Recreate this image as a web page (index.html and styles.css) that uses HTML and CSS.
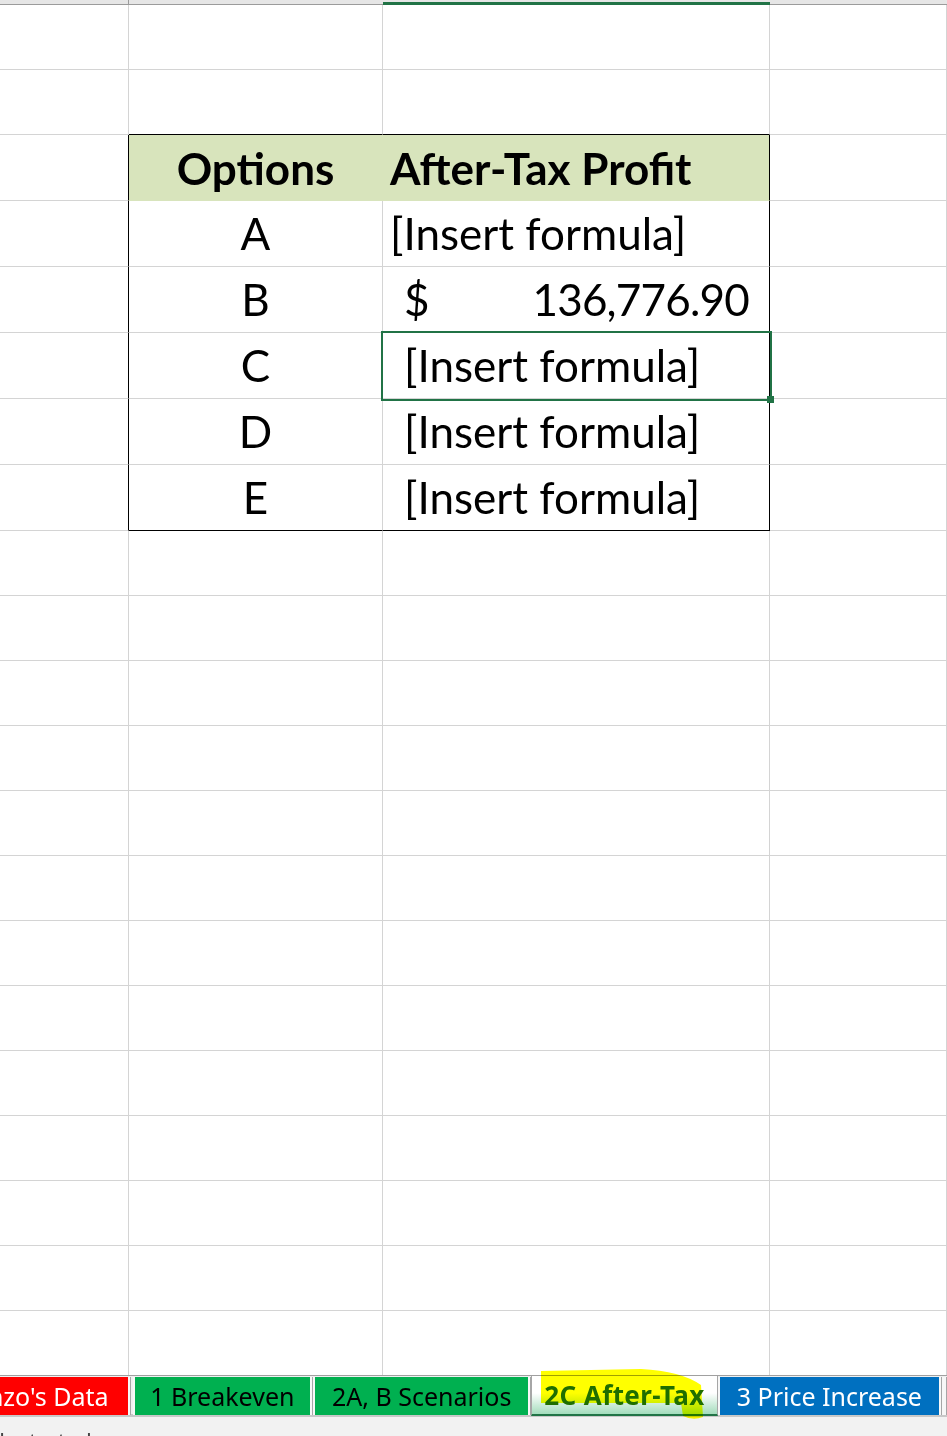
FILE: index.html
```html
<!DOCTYPE html>
<html lang="en">
<head>
  <meta charset="UTF-8" />
  <title>2C After-Tax</title>
  <link rel="stylesheet" href="styles.css">
</head>
<body>
  <div class="colhead">
    <div class="h0"></div>
    <div class="h1"></div>
    <div class="h2"></div>
    <div class="h3"></div>
  </div>

  <div class="sheet">
    <div class="row"><div class="c0"></div><div class="c1"></div><div class="c2"></div><div class="c3"></div></div>
    <div class="row above-table"><div class="c0"></div><div class="c1"></div><div class="c2"></div><div class="c3"></div></div>

    <div class="row tall thead">
      <div class="c0"></div>
      <div class="c1 center bold">Options</div>
      <div class="c2 bold">After-Tax Profit</div>
      <div class="c3"></div>
    </div>
    <div class="row tall tbody">
      <div class="c0"></div>
      <div class="c1 center">A</div>
      <div class="c2">[Insert formula]</div>
      <div class="c3"></div>
    </div>
    <div class="row tall tbody">
      <div class="c0"></div>
      <div class="c1 center">B</div>
      <div class="c2 money"><span>$</span><span class="amount">136,776.90</span></div>
      <div class="c3"></div>
    </div>
    <div class="row tall tbody">
      <div class="c0"></div>
      <div class="c1 center">C</div>
      <div class="c2 indent selected">[Insert formula]</div>
      <div class="c3"></div>
    </div>
    <div class="row tall tbody">
      <div class="c0"></div>
      <div class="c1 center">D</div>
      <div class="c2 indent">[Insert formula]</div>
      <div class="c3"></div>
    </div>
    <div class="row tall tbody last">
      <div class="c0"></div>
      <div class="c1 center">E</div>
      <div class="c2 indent">[Insert formula]</div>
      <div class="c3"></div>
    </div>

    <div class="row"><div class="c0"></div><div class="c1"></div><div class="c2"></div><div class="c3"></div></div>
    <div class="row"><div class="c0"></div><div class="c1"></div><div class="c2"></div><div class="c3"></div></div>
    <div class="row"><div class="c0"></div><div class="c1"></div><div class="c2"></div><div class="c3"></div></div>
    <div class="row"><div class="c0"></div><div class="c1"></div><div class="c2"></div><div class="c3"></div></div>
    <div class="row"><div class="c0"></div><div class="c1"></div><div class="c2"></div><div class="c3"></div></div>
    <div class="row"><div class="c0"></div><div class="c1"></div><div class="c2"></div><div class="c3"></div></div>
    <div class="row"><div class="c0"></div><div class="c1"></div><div class="c2"></div><div class="c3"></div></div>
    <div class="row"><div class="c0"></div><div class="c1"></div><div class="c2"></div><div class="c3"></div></div>
    <div class="row"><div class="c0"></div><div class="c1"></div><div class="c2"></div><div class="c3"></div></div>
    <div class="row"><div class="c0"></div><div class="c1"></div><div class="c2"></div><div class="c3"></div></div>
    <div class="row"><div class="c0"></div><div class="c1"></div><div class="c2"></div><div class="c3"></div></div>
    <div class="row"><div class="c0"></div><div class="c1"></div><div class="c2"></div><div class="c3"></div></div>
    <div class="row"><div class="c0"></div><div class="c1"></div><div class="c2"></div><div class="c3"></div></div>
  </div>

  <div class="tabbar">
    <div class="tab red"><span>Lorenzo's Data</span></div>
    <div class="tab green w1">1 Breakeven</div>
    <div class="tab green w2">2A, B Scenarios</div>
    <div class="tab active">
      <svg class="marker" width="170" height="52" viewBox="0 0 170 52">
        <path d="M0 2 L100 0 Q140 2 160 16 L162 48 Q152 52 142 47 L140 34 L0 34 Z" fill="#ffff00"/>
      </svg>
      <span>2C After-Tax</span>
    </div>
    <div class="tab blue">3 Price Increase</div>
    <div class="tab rest"></div>
  </div>

  <div class="status">Illustrated</div>
</body>
</html>
```

FILE: styles.css
```css
body {
  margin: 0;
  width: 947px;
  height: 1436px;
  overflow: hidden;
  background: #fff;
  font-family: Lato, "Liberation Sans", sans-serif;
  color: #000;
}

/* column header strip */
.colhead {
  display: flex;
  height: 5px;
}
.colhead div {
  box-sizing: border-box;
  height: 5px;
  background: #e6e6e6;
  border-bottom: 1px solid #9b9b9b;
}
.h0 { width: 129px; border-right: 1px solid #9b9b9b; }
.h1 { width: 254px; }
.colhead .h2 { width: 387px; border-bottom: 3px solid #217346; }
.h3 { flex: 1; }

/* grid */
.sheet {
  height: 1370px;
  overflow: hidden;
}
.row {
  display: flex;
  height: 65px;
}
.row.tall {
  height: 66px;
}
.row > div {
  box-sizing: border-box;
  height: 100%;
  border-right: 1px solid #d4d4d4;
  border-bottom: 1px solid #d4d4d4;
  display: flex;
  align-items: flex-end;
  font-size: 44px;
  line-height: 1;
  padding-bottom: 11px;
  white-space: nowrap;
}
.c0 { width: 129px; }
.c1 { width: 254px; }
.c2 { width: 387px; padding-left: 7px; }
.c3 { flex: 1; }

.center { justify-content: center; }
.bold { font-weight: 700; }
.indent { padding-left: 21px; }

.money {
  justify-content: space-between;
  padding-left: 21px;
  padding-right: 20px;
}
.amount {
  letter-spacing: -0.8px;
}

/* table frame */
.above-table .c1,
.above-table .c2 { border-bottom-color: #000; }
.thead .c0,
.tbody .c0 { border-right-color: #000; }
.thead .c2,
.tbody .c2 { border-right-color: #000; }
.thead .c1,
.thead .c2 {
  background: #d8e4bc;
  border-bottom-color: #d8e4bc;
}
.thead .c1 { border-right-color: #d8e4bc; }
.row.thead > div { padding-bottom: 10px; }
.last .c1,
.last .c2 { border-bottom-color: #000; }

/* active cell */
.selected {
  position: relative;
}
.selected::after {
  content: "";
  position: absolute;
  left: -2px;
  top: -2px;
  right: -3px;
  bottom: -3px;
  border: 2px solid #217346;
  z-index: 1;
}
.selected::before {
  content: "";
  position: absolute;
  right: -5px;
  bottom: -5px;
  width: 7px;
  height: 7px;
  background: #217346;
  z-index: 2;
}

/* sheet tabs */
.tabbar {
  display: flex;
  height: 42px;
  box-sizing: border-box;
  border-top: 1px solid #a0a0a0;
  border-bottom: 3px solid #c8c8c8;
  background: #f0f0f0;
  font-family: "Noto Sans", "Open Sans", sans-serif;
  font-size: 25px;
}
.tab {
  box-sizing: border-box;
  height: 38px;
  margin-top: 1px;
  display: flex;
  align-items: center;
  justify-content: center;
  white-space: nowrap;
  border-right: 1px solid #a6a6a6;
  box-shadow: 2px 0 0 #f7f7f7 inset, -2px 0 0 #f7f7f7 inset;
  padding: 0 2px;
}
.tab.red {
  width: 131px;
  background: #ff0000;
  color: #fff;
  justify-content: flex-end;
  padding-right: 21px;
  overflow: hidden;
  box-shadow: -2px 0 0 #f7f7f7 inset;
}
.tab.green {
  background: #00b050;
  color: #000;
}
.w1 { width: 181px; margin-left: 2px; }
.w2 { width: 219px; }
.tab.active {
  position: relative;
  width: 187px;
  margin-top: 0;
  height: 40px;
  background: linear-gradient(#fff 45%, #a3dcbc);
  border-left: 1px solid #a6a6a6;
  border-bottom: 2px solid #217346;
  box-shadow: none;
  color: #1f6e00;
  font-size: 26px;
  font-weight: 700;
  letter-spacing: 0.4px;
}
.tab.active span {
  position: relative;
  z-index: 1;
}
.marker {
  position: absolute;
  left: 9px;
  top: -7px;
  mix-blend-mode: multiply;
}
.tab.blue {
  width: 225px;
  background: #0070c0;
  color: #fff;
}
.tab.rest {
  flex: 1;
  background: #f0f0f0;
}

.status {
  height: 20px;
  margin-left: -14px;
  background: #f2f2f2;
  font-family: "Noto Sans", sans-serif;
  font-size: 22px;
  line-height: 20px;
  padding-top: 13px;
  color: #444;
  overflow: hidden;
}
```
